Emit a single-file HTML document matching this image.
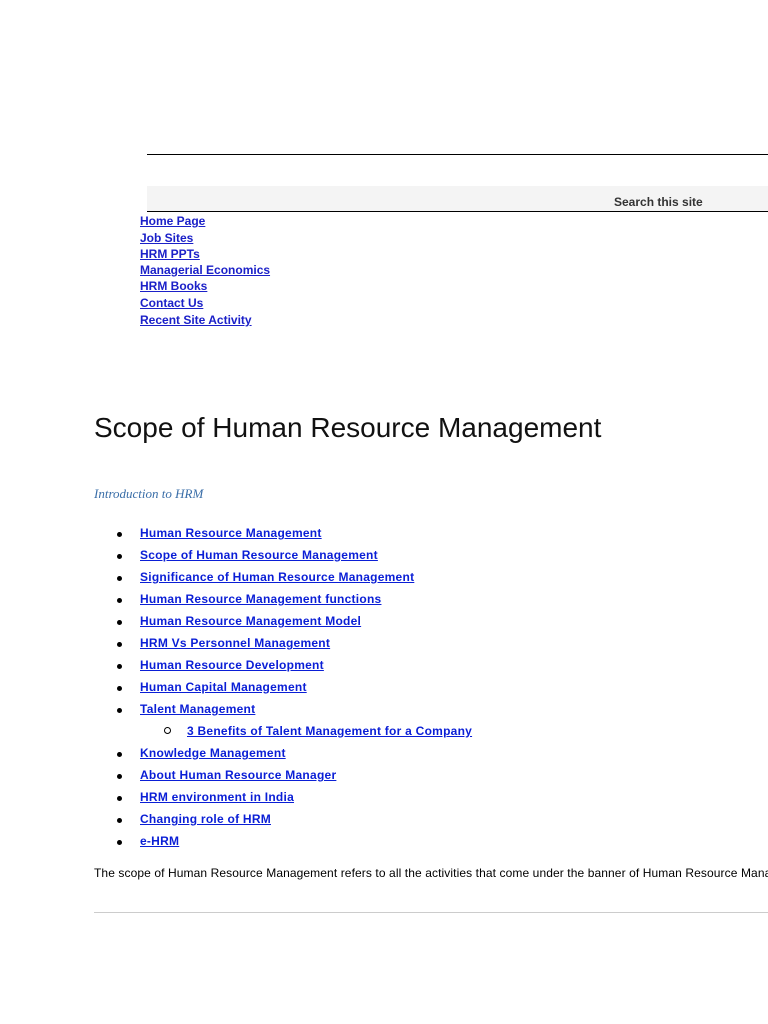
<!DOCTYPE html>
<html><head><meta charset="utf-8"><style>
body{margin:0;width:768px;height:1024px;background:#fff;position:relative;overflow:hidden;font-family:"Liberation Sans",sans-serif}
.a{position:absolute;white-space:nowrap}
a{color:#0a1ed6;text-decoration:underline;font-weight:bold;font-size:12px;letter-spacing:0.25px}
.nav a{color:#1b20c8;letter-spacing:0}
.li{position:absolute;left:140px;white-space:nowrap;line-height:14px}
.dot{position:absolute;left:117px;width:5px;height:5px;border-radius:50%;background:#000}
</style></head><body>
<div class="a" style="left:147px;top:154px;width:621px;height:1px;background:#000"></div>
<div class="a" style="left:147px;top:186px;width:621px;height:25px;background:#f4f4f4;border-bottom:1px solid #000"></div>
<div class="a" style="left:614px;top:195px;font-size:12px;font-weight:bold;color:#333;letter-spacing:0">Search this site</div>
<div class="nav">
<div class="li" style="top:214px"><a>Home Page</a></div>
<div class="li" style="top:231px"><a>Job Sites</a></div>
<div class="li" style="top:247px"><a>HRM PPTs</a></div>
<div class="li" style="top:263px"><a>Managerial Economics</a></div>
<div class="li" style="top:279px"><a>HRM Books</a></div>
<div class="li" style="top:296px"><a>Contact Us</a></div>
<div class="li" style="top:313px"><a>Recent Site Activity</a></div>
</div>
<div class="a" style="left:94px;top:412px;font-size:28px;color:#111;letter-spacing:0">Scope of Human Resource Management</div>
<div class="a" style="left:94px;top:486px;font-family:'Liberation Serif',serif;font-style:italic;font-size:13px;color:#3a6ea8">Introduction to HRM</div>
<div class="li" style="top:526px"><a>Human Resource Management</a></div><div class="dot" style="top:532px"></div>
<div class="li" style="top:548px"><a>Scope of Human Resource Management</a></div><div class="dot" style="top:554px"></div>
<div class="li" style="top:570px"><a>Significance of Human Resource Management</a></div><div class="dot" style="top:576px"></div>
<div class="li" style="top:592px"><a>Human Resource Management functions</a></div><div class="dot" style="top:598px"></div>
<div class="li" style="top:614px"><a>Human Resource Management Model</a></div><div class="dot" style="top:620px"></div>
<div class="li" style="top:636px"><a>HRM Vs Personnel Management</a></div><div class="dot" style="top:642px"></div>
<div class="li" style="top:658px"><a>Human Resource Development</a></div><div class="dot" style="top:664px"></div>
<div class="li" style="top:680px"><a>Human Capital Management</a></div><div class="dot" style="top:686px"></div>
<div class="li" style="top:702px"><a>Talent Management</a></div><div class="dot" style="top:708px"></div>
<div class="li" style="top:724px;left:187px"><a>3 Benefits of Talent Management for a Company</a></div><div class="a" style="left:164px;top:727px;width:5px;height:5px;border:1px solid #000;border-radius:50%"></div>
<div class="li" style="top:746px"><a>Knowledge Management</a></div><div class="dot" style="top:752px"></div>
<div class="li" style="top:768px"><a>About Human Resource Manager</a></div><div class="dot" style="top:774px"></div>
<div class="li" style="top:790px"><a>HRM environment in India</a></div><div class="dot" style="top:796px"></div>
<div class="li" style="top:812px"><a>Changing role of HRM</a></div><div class="dot" style="top:818px"></div>
<div class="li" style="top:834px"><a>e-HRM</a></div><div class="dot" style="top:840px"></div>
<div class="a" style="left:94px;top:866px;font-size:12px;color:#000;letter-spacing:0.1px">The scope of Human Resource Management refers to all the activities that come under the banner of Human Resource Management</div>
<div class="a" style="left:94px;top:912px;width:674px;height:1px;background:#ccc"></div>
</body></html>
